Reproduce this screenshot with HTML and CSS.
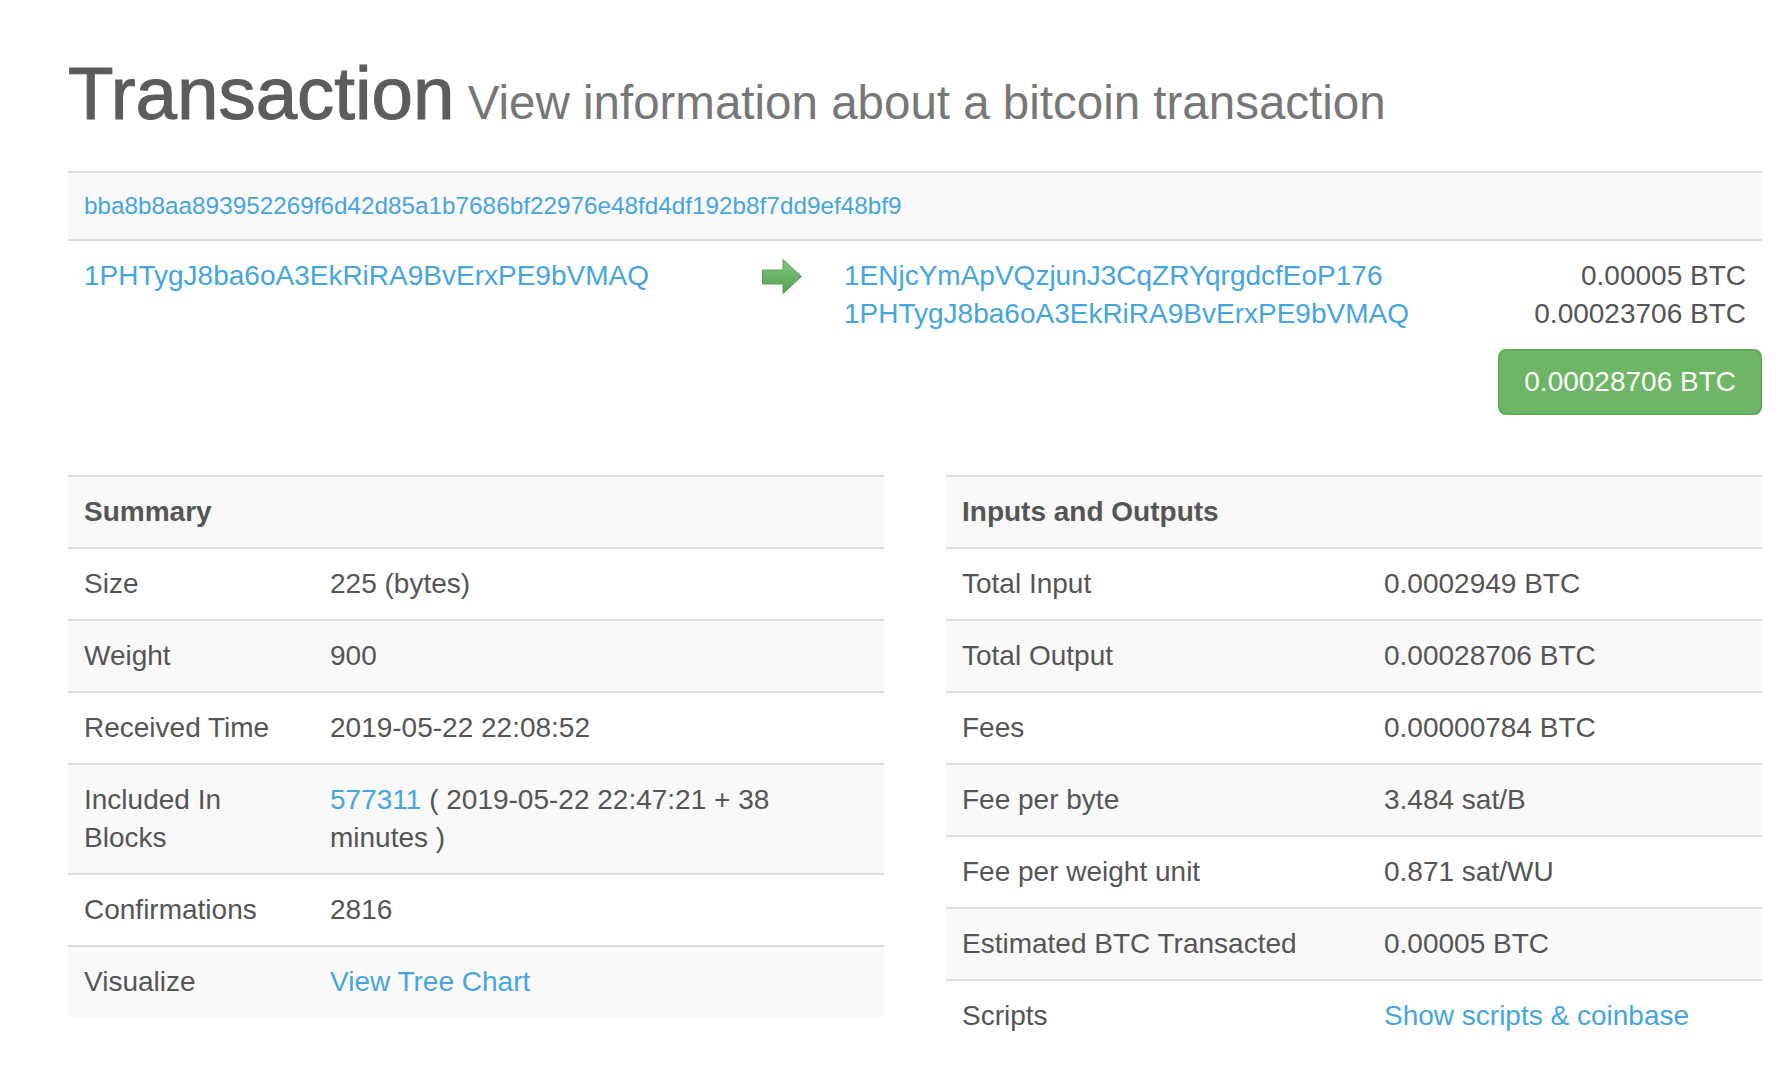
FILE: index.html
```html
<!DOCTYPE html>
<html lang="en">
<head>
    <meta charset="UTF-8">
    <meta name="viewport" content="width=device-width, initial-scale=1.0">
    <title>Transaction</title>
    <link rel="stylesheet" href="styles.css">
</head>
<body>
    <div class="page">
        <h1>Transaction<small> View information about a bitcoin transaction</small></h1>

        <div class="tx">
            <div class="tx-hash">
                <a href="#">bba8b8aa893952269f6d42d85a1b7686bf22976e48fd4df192b8f7dd9ef48bf9</a>
            </div>
            <div class="tx-body">
                <div class="tx-in">
                    <a href="#">1PHTygJ8ba6oA3EkRiRA9BvErxPE9bVMAQ</a>
                </div>
                <div class="tx-arrow">
                    <svg width="40" height="36" viewBox="0 0 40 36">
                        <defs>
                            <linearGradient id="arrowFill" x1="0" y1="0" x2="0" y2="1">
                                <stop offset="0" stop-color="#7fc77c"/>
                                <stop offset="1" stop-color="#559f53"/>
                            </linearGradient>
                        </defs>
                        <polygon points="0.5,11 21,11 21,0.5 39.5,17.5 21,34.5 21,25 0.5,25" fill="url(#arrowFill)" stroke="#5a9f57" stroke-width="1"/>
                    </svg>
                </div>
                <div class="tx-out">
                    <div class="out-row">
                        <a href="#">1ENjcYmApVQzjunJ3CqZRYqrgdcfEoP176</a>
                        <span>0.00005 BTC</span>
                    </div>
                    <div class="out-row">
                        <a href="#">1PHTygJ8ba6oA3EkRiRA9BvErxPE9bVMAQ</a>
                        <span>0.00023706 BTC</span>
                    </div>
                </div>
            </div>
            <div class="tx-total">
                <button class="btn-success">0.00028706 BTC</button>
            </div>
        </div>

        <div class="tables">
            <table class="info summary">
                <tr><th colspan="2">Summary</th></tr>
                <tr><td>Size</td><td>225 (bytes)</td></tr>
                <tr><td>Weight</td><td>900</td></tr>
                <tr><td>Received Time</td><td>2019-05-22 22:08:52</td></tr>
                <tr><td>Included In<br>Blocks</td><td><a href="#">577311</a> ( 2019-05-22 22:47:21 + 38 minutes )</td></tr>
                <tr><td>Confirmations</td><td>2816</td></tr>
                <tr><td>Visualize</td><td><a href="#">View Tree Chart</a></td></tr>
            </table>

            <table class="info io">
                <tr><th colspan="2">Inputs and Outputs</th></tr>
                <tr><td>Total Input</td><td>0.0002949 BTC</td></tr>
                <tr><td>Total Output</td><td>0.00028706 BTC</td></tr>
                <tr><td>Fees</td><td>0.00000784 BTC</td></tr>
                <tr><td>Fee per byte</td><td>3.484 sat/B</td></tr>
                <tr><td>Fee per weight unit</td><td>0.871 sat/WU</td></tr>
                <tr><td>Estimated BTC Transacted</td><td>0.00005 BTC</td></tr>
                <tr><td>Scripts</td><td><a href="#">Show scripts &amp; coinbase</a></td></tr>
            </table>
        </div>
    </div>
</body>
</html>
```

FILE: styles.css
```css
body {
    margin: 0;
    background: #fff;
    font-family: "Liberation Sans", Arial, sans-serif;
    font-size: 28px;
    line-height: 38px;
    color: #555;
}

a {
    color: #46a5df;
    text-decoration: none;
}

.page {
    padding: 0 30px 0 68px;
}

h1 {
    margin: 54px 0 29px;
    font-size: 74.5px;
    line-height: 79px;
    font-weight: normal;
    color: #5c5c5c;
    -webkit-text-stroke: 1.1px #5c5c5c;
}

h1 small {
    font-size: 47.5px;
    color: #777;
    -webkit-text-stroke: 0;
}

.tx-hash {
    background: #f9f9f9;
    border-top: 2px solid #ddd;
    border-bottom: 2px solid #ddd;
    padding: 16px;
    font-size: 24.3px;
    line-height: 34px;
}

.tx-body {
    display: grid;
    grid-template-columns: 678px 82px 1fr;
    padding-top: 16px;
}

.tx-in {
    padding: 0 16px;
}

.tx-arrow {
    padding: 2px 16px 0;
}

.tx-arrow svg {
    display: block;
}

.tx-out {
    padding: 0 16px;
}

.out-row {
    display: flex;
    justify-content: space-between;
}

.tx-total {
    display: flex;
    justify-content: flex-end;
    padding-top: 16px;
}

.btn-success {
    font-family: inherit;
    font-size: 28px;
    line-height: 38px;
    color: #fff;
    background: #6db665;
    border: 2px solid #62aa5a;
    border-radius: 8px;
    padding: 12px 24px;
    cursor: pointer;
}

.tables {
    display: grid;
    grid-template-columns: 1fr 1fr;
    column-gap: 62px;
    margin-top: 60px;
}

.info {
    width: 100%;
    border-collapse: collapse;
    align-self: start;
}

.info th,
.info td {
    padding: 16px;
    border-top: 2px solid #ddd;
    text-align: left;
    vertical-align: top;
}

.info th {
    font-weight: bold;
}

.info tr:nth-child(odd) {
    background: #f9f9f9;
}

.summary td:first-child {
    width: 214px;
}

.io td:first-child {
    width: 390px;
}
```
